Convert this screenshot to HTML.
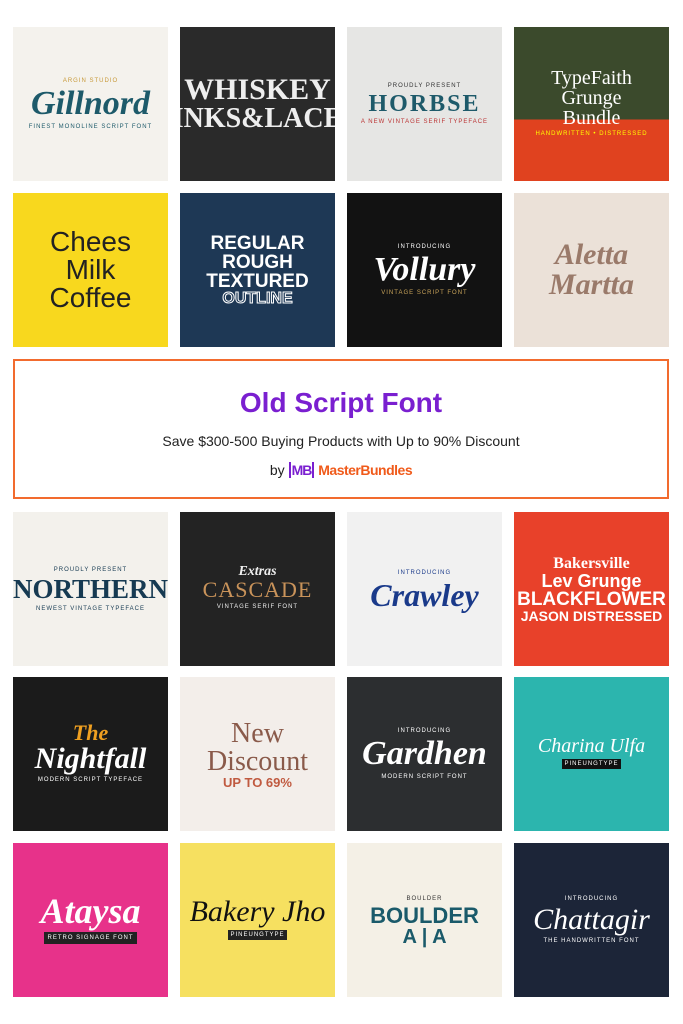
<!DOCTYPE html>
<html><head><meta charset="utf-8"><style>
body{margin:0;width:683px;height:1024px;background:#fff;position:relative;overflow:hidden;font-family:"Liberation Sans",sans-serif}
.t{position:absolute;width:155px;height:154px;overflow:hidden;display:flex;flex-direction:column;align-items:center;justify-content:center;text-align:center;line-height:1}
.c1{left:13px}.c2{left:180px}.c3{left:347px}.c4{left:514px}
.r1{top:27px}.r2{top:193px}.r4{top:512px}.r5{top:677px}.r6{top:843px}
.s{font-family:"Liberation Serif",serif;font-style:italic;font-weight:bold}
.b{font-weight:bold}
.sm{font-size:6px;letter-spacing:1px;margin:3px 0}
#ban{position:absolute;left:13px;top:359px;width:652px;height:136px;border:2px solid #f26b2e;text-align:center}
</style></head><body>
<div class="t c1 r1" style="background:#f4f2ed;color:#1d5a6a"><div class="sm" style="color:#c89a3a">ARGIN STUDIO</div><div class="s" style="font-size:34px">Gillnord</div><div class="sm">FINEST MONOLINE SCRIPT FONT</div></div>
<div class="t c2 r1" style="background:#2a2a2a;color:#eee"><div class="b" style="font-family:'Liberation Serif',serif;font-size:30px">WHISKEY</div><div class="b" style="font-family:'Liberation Serif',serif;font-size:28px">INKS&amp;LACE</div></div>
<div class="t c3 r1" style="background:#e6e6e4;color:#1e5a6a"><div class="sm" style="color:#333">PROUDLY PRESENT</div><div class="b" style="font-family:'Liberation Serif',serif;font-size:24px;letter-spacing:2px">HORBSE</div><div class="sm" style="color:#b33">A NEW VINTAGE SERIF TYPEFACE</div></div>
<div class="t c4 r1" style="background:linear-gradient(#3b4a2c 0 60%,#e0421f 60%);color:#fff"><div style="font-family:'Liberation Serif',serif;font-size:20px">TypeFaith<br>Grunge<br>Bundle</div><div class="sm" style="color:#ff0">HANDWRITTEN • DISTRESSED</div></div>

<div class="t c1 r2" style="background:#f8d81e;color:#222"><div style="font-size:28px;font-family:'Liberation Sans Narrow',sans-serif">Chees<br>Milk<br>Coffee</div></div>
<div class="t c2 r2" style="background:#1e3855;color:#fff"><div class="b" style="font-size:19px">REGULAR<br>ROUGH<br>TEXTURED</div><div class="b" style="font-size:16px;color:#1e3855;-webkit-text-stroke:1px #fff">OUTLINE</div></div>
<div class="t c3 r2" style="background:#121212;color:#fff"><div class="sm">INTRODUCING</div><div class="s" style="font-size:34px">Vollury</div><div class="sm" style="color:#c9a45a">VINTAGE SCRIPT FONT</div></div>
<div class="t c4 r2" style="background:#ebe1d8;color:#9a7a6a"><div class="s" style="font-size:30px">Aletta<br>Martta</div></div>

<div id="ban"><div style="margin-top:26px;font-size:28px;font-weight:bold;color:#7a1fd0">Old Script Font</div><div style="margin-top:14px;font-size:14px;color:#222">Save $300-500 Buying Products with Up to 90% Discount</div><div style="margin-top:13px;font-size:14px;color:#222">by <span style="color:#7a1fd0;font-weight:bold;border-left:2px solid #7a1fd0;border-right:2px solid #7a1fd0;padding:0 1px;letter-spacing:-1px">MB</span> <span style="color:#f05a1a;font-weight:bold;letter-spacing:-0.5px">MasterBundles</span></div></div>

<div class="t c1 r4" style="background:#f3f1ec;color:#163a52"><div class="sm">PROUDLY PRESENT</div><div class="b" style="font-family:'Liberation Serif',serif;font-size:27px">NORTHERN</div><div class="sm">NEWEST VINTAGE TYPEFACE</div></div>
<div class="t c2 r4" style="background:#232323;color:#c9935a"><div class="s" style="font-size:14px;color:#eee">Extras</div><div style="font-family:'Liberation Serif',serif;font-size:22px;letter-spacing:1px">CASCADE</div><div class="sm" style="color:#eee">VINTAGE SERIF FONT</div></div>
<div class="t c3 r4" style="background:#f1f1f1;color:#1a3a8a"><div class="sm">INTRODUCING</div><div class="s" style="font-size:32px">Crawley</div></div>
<div class="t c4 r4" style="background:#e8412a;color:#fff"><div class="b" style="font-size:16px;font-family:'Liberation Serif',serif">Bakersville</div><div class="b" style="font-size:18px">Lev Grunge</div><div class="b" style="font-size:19px">BLACKFLOWER</div><div class="b" style="font-size:14px">JASON DISTRESSED</div></div>

<div class="t c5 c1 r5" style="background:#1b1b1b;color:#fff"><div class="s" style="font-size:22px;color:#f0a020">The</div><div class="s" style="font-size:30px">Nightfall</div><div class="sm">MODERN SCRIPT TYPEFACE</div></div>
<div class="t c2 r5" style="background:#f3eeea;color:#8a5a4a"><div style="font-family:'Liberation Serif',serif;font-size:28px">New<br>Discount</div><div class="b" style="font-size:13px;color:#c05a40">UP TO 69%</div></div>
<div class="t c3 r5" style="background:#2c2e30;color:#fff"><div class="sm">INTRODUCING</div><div class="s" style="font-size:34px">Gardhen</div><div class="sm">MODERN SCRIPT FONT</div></div>
<div class="t c4 r5" style="background:#2cb5ae;color:#fff"><div class="s" style="font-size:20px;font-weight:normal">Charina Ulfa</div><div class="sm" style="background:#111;padding:2px">PINEUNGTYPE</div></div>

<div class="t c1 r6" style="background:#e7328a;color:#fff"><div class="s" style="font-size:36px">Ataysa</div><div class="sm" style="background:#222;padding:3px">RETRO SIGNAGE FONT</div></div>
<div class="t c2 r6" style="background:#f6e060;color:#111"><div class="s" style="font-size:30px;font-weight:normal">Bakery Jho</div><div class="sm" style="background:#222;color:#fff;padding:2px">PINEUNGTYPE</div></div>
<div class="t c3 r6" style="background:#f4f0e6;color:#1a5a6a"><div class="sm" style="color:#333">BOULDER</div><div class="b" style="font-size:22px">BOULDER</div><div class="b" style="font-size:20px">A | A</div></div>
<div class="t c4 r6" style="background:#1c2538;color:#fff"><div class="sm">INTRODUCING</div><div class="s" style="font-size:30px;font-weight:normal">Chattagir</div><div class="sm">THE HANDWRITTEN FONT</div></div>
</body></html>
